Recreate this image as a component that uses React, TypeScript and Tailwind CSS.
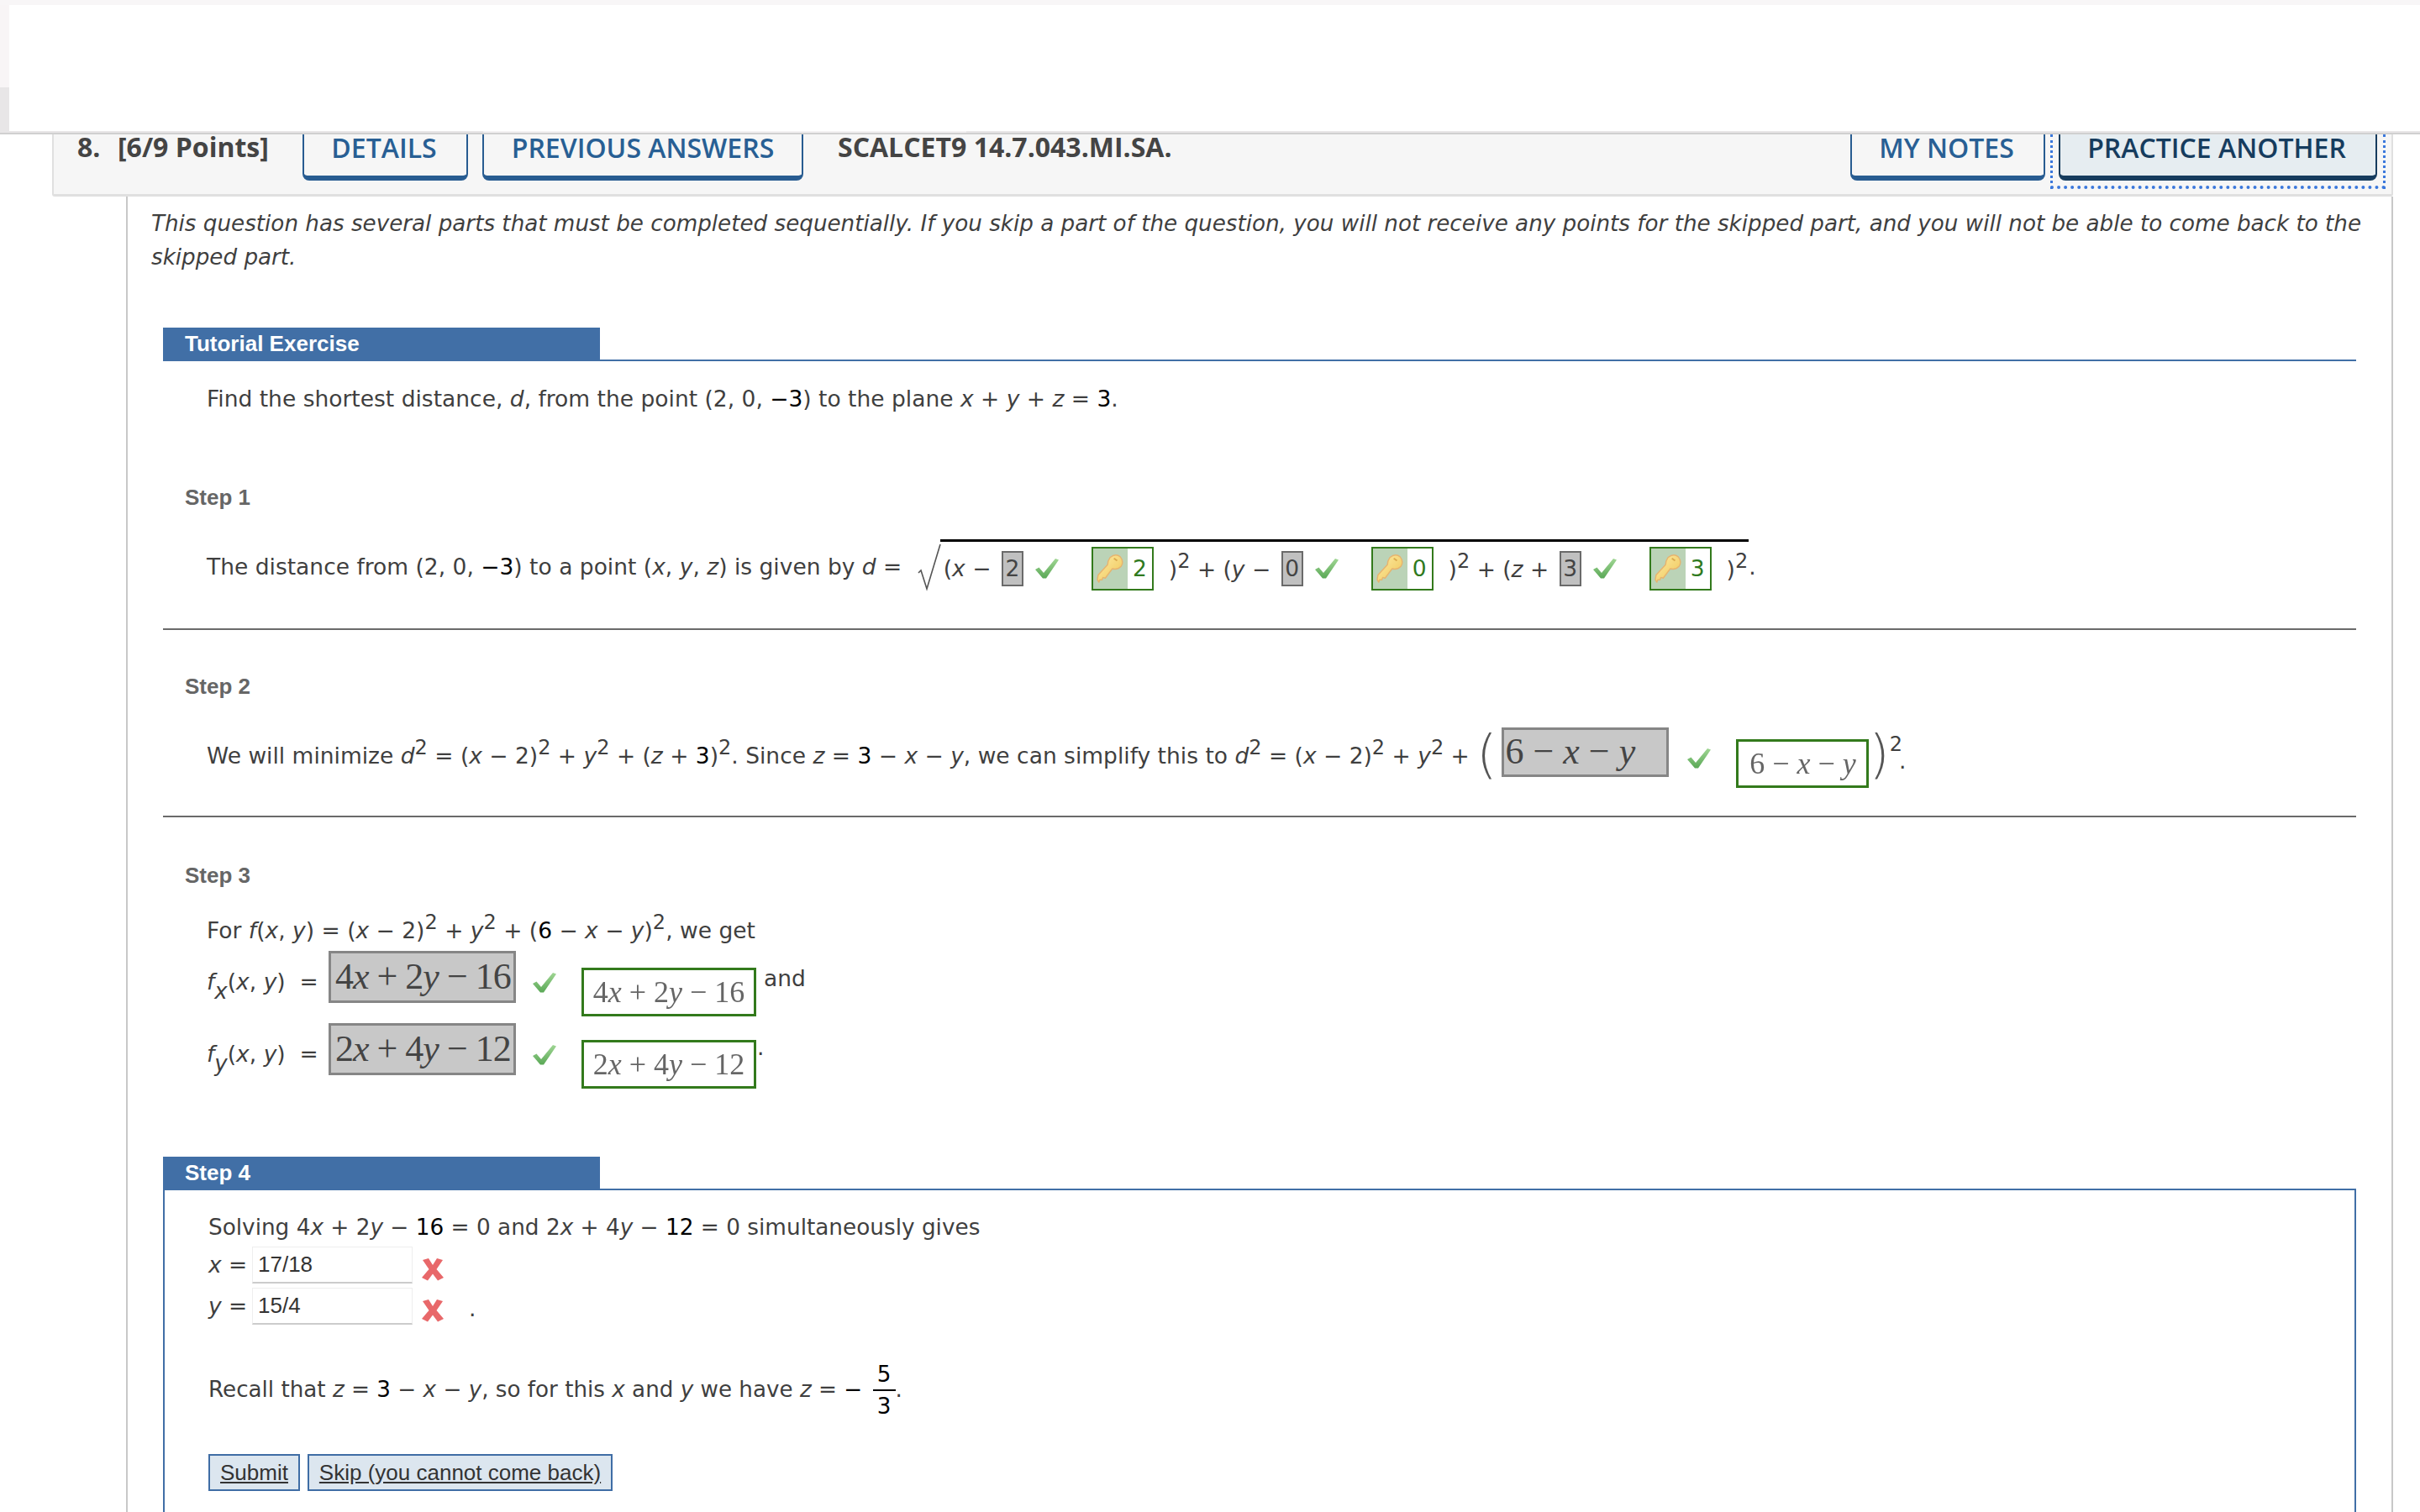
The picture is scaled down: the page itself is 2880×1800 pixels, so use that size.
import React from 'react';

const Sup: React.FC<{ children: React.ReactNode }> = ({ children }) => (
  <span className="text-[24px] leading-none align-[11px]">{children}</span>
);
const N: React.FC<{ children: React.ReactNode }> = ({ children }) => <span className="text-black">{children}</span>;
const Two = () => <Sup>2</Sup>;

const Check: React.FC<{ className?: string }> = ({ className }) => (
  <svg viewBox="0 0 30 24" className={`w-[30px] h-[25px] shrink-0 ${className || ''}`}>
    <defs>
      <linearGradient id="chk" x1="0" y1="0" x2="0" y2="1">
        <stop offset="0" stopColor="#a0d694" />
        <stop offset="1" stopColor="#5aa856" />
      </linearGradient>
    </defs>
    <path d="M1 13.5 L5.5 11 L11 17.5 L25 0.5 L29 2 L14 24 L10 24 Z" fill="url(#chk)" />
  </svg>
);

const Cross: React.FC = () => (
  <svg viewBox="0 0 28 28" className="w-[28px] h-[28px] shrink-0">
    <path d="M2 3 L9 1 L14 9 L19 1 L26 3 L18.5 14 L27 24 L20 27.5 L14 19.5 L8 27.5 L1 24 L9.5 14 Z" fill="#e8686a" />
  </svg>
);

const Key = () => (
  <svg viewBox="0 0 34 38" className="w-[32px] h-[36px]">
    <defs>
      <linearGradient id="gold" x1="0" y1="0" x2="1" y2="1">
        <stop offset="0" stopColor="#fdeca6" />
        <stop offset="1" stopColor="#efc555" />
      </linearGradient>
    </defs>
    <path
      d="M17 5 Q24 -1 30 4 Q35 10 31 16 Q26 21 20 19 L11 31 L8 30 L7 33 L4 33 L3 36 L1 33 L2 27 L14 14 Q14 9 17 5 Z"
      fill="url(#gold)"
      stroke="#e6b46f"
      strokeWidth="1.5"
      strokeLinejoin="round"
    />
    <path d="M22 6 L26 9" stroke="#d9a94e" strokeWidth="2" />
  </svg>
);

const GrayCell: React.FC<{ children: React.ReactNode; className?: string }> = ({ children, className }) => (
  <span className={`inline-flex items-center justify-center w-[26px] h-[42px] bg-[#c0c0c0] border-2 border-[#6a6a6a] text-[#444] ${className || ''}`}>
    {children}
  </span>
);

const KeyBox: React.FC<{ children: React.ReactNode; className?: string }> = ({ children, className }) => (
  <span className={`inline-flex w-[74px] h-[52px] border-2 border-[#337a1c] bg-white shrink-0 ${className || ''}`}>
    <span className="w-[41px] bg-[#bbd3b7] flex items-center justify-center">
      <Key />
    </span>
    <span className="flex-1 flex items-center justify-center text-[#2f7a1e]">{children}</span>
  </span>
);

const Tex: React.FC<{ children: React.ReactNode; className?: string }> = ({ children, className }) => (
  <span className={`font-['Liberation_Serif',serif] whitespace-nowrap ${className || ''}`}>{children}</span>
);

const GrayTex: React.FC<{ children: React.ReactNode; className?: string }> = ({ children, className }) => (
  <span className={`flex items-center pl-[5px] bg-[#c8c8c8] border-[3px] border-[#868686] text-[#444] text-[44px] tracking-[-1px] shrink-0 ${className || ''}`}>
    <Tex>{children}</Tex>
  </span>
);

const GreenTex: React.FC<{ children: React.ReactNode; className?: string }> = ({ children, className }) => (
  <span className={`flex items-center justify-center border-[3px] border-[#337a1c] text-[#666] text-[36px] shrink-0 ${className || ''}`}>
    <Tex className="blur-[0.4px]">{children}</Tex>
  </span>
);

const HeaderBtn: React.FC<{ children: React.ReactNode; className?: string }> = ({ children, className }) => (
  <button className={`h-[55px] border-x-2 border-b-[6px] border-[#285c91] rounded-b-[8px] text-[#285f94] text-[32px] leading-[32px] font-semibold pb-[24px] shrink-0 ${className || ''}`}>
    {children}
  </button>
);

const StepLabel: React.FC<{ children: React.ReactNode; className?: string }> = ({ children, className }) => (
  <div className={`font-['Liberation_Sans',sans-serif] font-bold text-[#666] text-[26px] leading-[32px] ml-[26px] ${className || ''}`}>
    {children}
  </div>
);

const BlueBar: React.FC<{ children: React.ReactNode }> = ({ children }) => (
  <div className="h-[40px] border-b-2 border-[#416fa6]">
    <div className="w-[520px] h-[40px] bg-[#416fa6] text-white pl-[26px] font-['Liberation_Sans',sans-serif] font-bold text-[26px] leading-[38px]">
      {children}
    </div>
  </div>
);

const Rule = ({ className }: { className?: string }) => <div className={`h-[2px] bg-[#6a6a6a] ${className || ''}`} />;

export default function App() {
  return (
    <div className="w-[2880px] h-[1800px] overflow-hidden bg-white flex flex-col font-['DejaVu_Sans',sans-serif] text-[26.5px] text-[#3f3f3f]">
      {/* fixed page header, blank in this capture */}
      <div className="h-[160px] shrink-0 flex flex-col bg-[#f8f6f7] border-b-[2px] border-[#d0d0d0]">
        <div className="h-[6px] shrink-0" />
        <div className="flex-1 flex">
          <div className="w-[11px] flex flex-col">
            <div className="h-[98px] bg-[#f8f5f6]" />
            <div className="flex-1 bg-[#e8e6e7]" />
          </div>
          <div className="flex-1 bg-white" />
        </div>
        <div className="h-[2px] shrink-0 flex bg-[#e8e6e7]">
          <div className="w-[575px]" />
          <div className="w-[575px] bg-[#f3f1f2]" />
        </div>
      </div>

      {/* question header */}
      <div className="ml-[62px] w-[2786px] h-[74px] shrink-0 bg-[#f6f6f6] border-b-[3px] border-l-2 border-r-2 border-[#e0e0e0] rounded-b-[3px] flex font-['Open_Sans',sans-serif]">
        <div className="w-[28px] shrink-0" />
        <span className="font-bold text-[32px] leading-[30px] text-[#444] shrink-0 w-[48px]">8.</span>
        <span className="font-bold text-[32px] leading-[30px] text-[#444] shrink-0 w-[220px]">[6/9 Points]</span>
        <HeaderBtn className="w-[197px] pr-[3px]">DETAILS</HeaderBtn>
        <HeaderBtn className="w-[382px] ml-[17px]">PREVIOUS ANSWERS</HeaderBtn>
        <span className="ml-[41px] font-bold text-[32px] leading-[30px] text-[#444] shrink-0">SCALCET9 14.7.043.MI.SA.</span>
        <div className="flex-1" />
        <HeaderBtn className="w-[232px] pr-[3px]">MY NOTES</HeaderBtn>
        <div className="ml-[6px] mr-[7px] h-[65px] px-[7px] border-x-[3px] border-b-[4px] border-dotted border-[#3b78dc] shrink-0 flex items-start">
          <HeaderBtn className="w-[379px] pr-[3px] bg-[#e6edf1] !text-[#163c5e] !border-[#163c5e]">PRACTICE ANOTHER</HeaderBtn>
        </div>
      </div>

      {/* question body */}
      <div className="ml-[150px] w-[2698px] flex-1 min-h-0 border-x-2 border-[#c8c8c8] pr-[30px]">
        <p className="mt-[12px] ml-[28px] italic text-[26.2px] leading-[40px]">
          This question has several parts that must be completed sequentially. If you skip a part of the question, you will not receive any points for the skipped part, and you will not be able to come back to the skipped part.
        </p>

        <div className="mt-[64px] ml-[42px] mr-[12px]">
          <BlueBar>Tutorial Exercise</BlueBar>
          <p className="ml-[52px] mt-[25px] leading-[40px]">
            Find the shortest distance, <i>d</i>, from the point (2, 0, <N>−3</N>) to the plane <i>x</i> + <i>y</i> + <i>z</i> = <N>3</N>.
          </p>

          <StepLabel className="mt-[81px]">Step 1</StepLabel>
          <div className="ml-[52px] mt-[34px] h-[66px] flex items-center whitespace-pre">
            <span>The distance from (2, 0, <N>−3</N>) to a point (<i>x</i>, <i>y</i>, <i>z</i>) is given by <i>d</i> = </span>
            <svg viewBox="0 0 30 58" className="w-[30px] h-[58px] shrink-0 ml-[9px]">
              <path d="M2 36 L5 33 L12 55 L28 2" fill="none" stroke="#555" strokeWidth="1.6" />
            </svg>
            <div className="flex items-center h-[66px] border-t-[3px] border-black pr-[1px] -ml-[2px] pl-[4px]">
              <span className="mr-[4px]">(<i>x</i> − </span>
              <GrayCell>2</GrayCell>
              <Check className="ml-[13px]" />
              <KeyBox className="ml-[38px]">2</KeyBox>
              <span className="ml-[18px] mr-[4px]">)<Two /> + (<i>y</i> − </span>
              <GrayCell>0</GrayCell>
              <Check className="ml-[13px]" />
              <KeyBox className="ml-[38px]">0</KeyBox>
              <span className="ml-[18px] mr-[4px]">)<Two /> + (<i>z</i> + </span>
              <GrayCell>3</GrayCell>
              <Check className="ml-[13px]" />
              <KeyBox className="ml-[38px]">3</KeyBox>
              <span className="ml-[18px]">)<Two /></span>
            </div>
            <span>.</span>
          </div>
          <Rule className="mt-[40px]" />

          <StepLabel className="mt-[51px]">Step 2</StepLabel>
          <div className="ml-[52px] mt-[33px] h-[72px] flex items-center whitespace-pre">
            <span className="-mt-[6px]">We will minimize <i>d</i><Two /> = (<i>x</i> − 2)<Two /> + <i>y</i><Two /> + (<i>z</i> + <N>3</N>)<Two />. Since <i>z</i> = <N>3</N> − <i>x</i> − <i>y</i>, we can simplify this to <i>d</i><Two /> = (<i>x</i> − 2)<Two /> + <i>y</i><Two /> + </span>
            <span className="text-[62px] leading-none font-light text-[#555] -mt-[8px]">(</span>
            <GrayTex className="w-[199px] h-[59px] ml-[6px] -mt-[14px] !pl-[1px] !tracking-[0px]">6 − <i>x</i> − <i>y</i></GrayTex>
            <Check className="ml-[21px]" />
            <GreenTex className="w-[158px] h-[58px] ml-[29px] mt-[14px]">6 − <i>x</i> − <i>y</i></GreenTex>
            <span className="text-[62px] leading-none font-light text-[#555] -mt-[8px]">)</span>
            <span className="-mt-[32px] text-[24px]">2</span>
            <span className="mt-[8px] -ml-[4px]">.</span>
          </div>
          <Rule className="mt-[33px]" />

          <StepLabel className="mt-[53px]">Step 3</StepLabel>
          <p className="ml-[52px] mt-[28px] leading-[40px]">
            For <i>f</i>(<i>x</i>, <i>y</i>) = (<i>x</i> − 2)<Two /> + <i>y</i><Two /> + (<N>6</N> − <i>x</i> − <i>y</i>)<Two />, we get
          </p>
          <div className="ml-[52px] mt-[4px] h-[76px] flex items-start whitespace-pre">
            <span className="w-[145px] mt-[17px] shrink-0"><i>f</i><sub className="text-[26px] italic -bottom-[11px]">x</sub>(<i>x</i>, <i>y</i>)  =</span>
            <GrayTex className="w-[223px] h-[62px]">4<i>x</i> + 2<i>y</i> − 16</GrayTex>
            <Check className="ml-[19px] mt-[25px]" />
            <GreenTex className="w-[208px] h-[58px] ml-[29px] mt-[20px]">4<i>x</i> + 2<i>y</i> − 16</GreenTex>
            <span className="ml-[9px] mt-[13px]">and</span>
          </div>
          <div className="ml-[52px] mt-[10px] h-[76px] flex items-start whitespace-pre">
            <span className="w-[145px] mt-[17px] shrink-0"><i>f</i><sub className="text-[26px] italic -bottom-[11px]">y</sub>(<i>x</i>, <i>y</i>)  =</span>
            <GrayTex className="w-[223px] h-[62px]">2<i>x</i> + 4<i>y</i> − 12</GrayTex>
            <Check className="ml-[19px] mt-[25px]" />
            <GreenTex className="w-[208px] h-[58px] ml-[29px] mt-[20px]">2<i>x</i> + 4<i>y</i> − 12</GreenTex>
            <span className="ml-[1px] mt-[9px]">.</span>
          </div>

          <div className="mt-[83px]">
            <BlueBar>Step 4</BlueBar>
            <div className="h-[500px] border-x-2 border-[#416fa6] pl-[52px] pt-[24px]">
              <p className="leading-[40px] text-[26.3px]">
                Solving 4<i>x</i> + 2<i>y</i> − <N>16</N> = 0 and 2<i>x</i> + 4<i>y</i> − <N>12</N> = 0 simultaneously gives
              </p>
              <div className="mt-[3px] flex items-center h-[44px] whitespace-pre">
                <span className="w-[52px] text-right"><i>x</i> = </span>
                <input readOnly value="17/18" className="w-[191px] h-[44px] bg-white border border-[#eee] border-b-2 border-b-[#ccc] pl-[6px] font-['Liberation_Sans',sans-serif] text-[26px] text-[#333] outline-none" />
                <span className="ml-[10px] mt-[10px] flex"><Cross /></span>
              </div>
              <div className="mt-[5px] flex items-center h-[44px] whitespace-pre">
                <span className="w-[52px] text-right"><i>y</i> = </span>
                <input readOnly value="15/4" className="w-[191px] h-[44px] bg-white border border-[#eee] border-b-2 border-b-[#ccc] pl-[6px] font-['Liberation_Sans',sans-serif] text-[26px] text-[#333] outline-none" />
                <span className="ml-[10px] mt-[10px] flex"><Cross /></span>
                <span className="ml-[29px] mt-[6px]">.</span>
              </div>
              <div className="mt-[38px] h-[80px] flex items-center whitespace-pre text-[26.2px]">
                <span>Recall that <i>z</i> = <N>3</N> − <i>x</i> − <i>y</i>, so for this <i>x</i> and <i>y</i> we have <i>z</i> = </span>
                <N>− </N>
                <span className="inline-flex flex-col items-center text-black leading-[36px] w-[27px] ml-[4px]">
                  <span>5</span>
                  <span className="w-full h-[2px] bg-black" />
                  <span>3</span>
                </span>
                <span>.</span>
              </div>
              <div className="mt-[36px] flex gap-[9px] font-['Liberation_Sans',sans-serif] text-[26px] text-[#333] whitespace-nowrap">
                <button className="h-[44px] w-[109px] bg-[#dce6ef] border-2 border-[#3f6da5] underline">Submit</button>
                <button className="h-[44px] w-[363px] bg-[#dce6ef] border-2 border-[#3f6da5] underline">Skip (you cannot come back)</button>
              </div>
            </div>
          </div>
        </div>
      </div>
    </div>
  );
}
